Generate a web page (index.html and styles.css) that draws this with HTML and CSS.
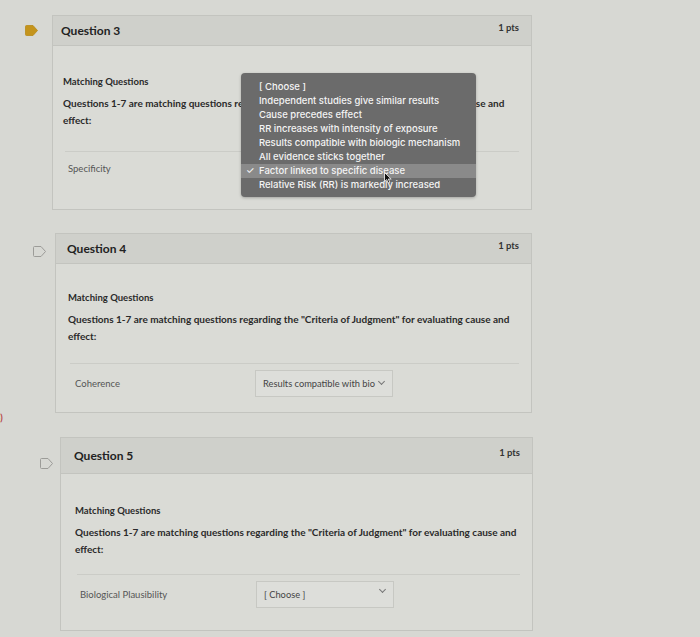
FILE: index.html
```html
<!DOCTYPE html>
<html>
<head>
<meta charset="utf-8">
<link rel="stylesheet" href="styles.css">
</head>
<body>
<div class="page">
  <span class="edge-mark">-)</span>

  <div class="question q3">
    <svg class="flag" viewBox="0 0 13 11" width="13" height="11"><path d="M1.5 0.5 H8 L12.5 5.5 L8 10.5 H1.5 Q0.5 10.5 0.5 9.5 V1.5 Q0.5 0.5 1.5 0.5 Z" fill="#c4941c" stroke="#b88a18" stroke-width="0.8"/></svg>
    <div class="card">
      <div class="card-header">
        <span class="title">Question 3</span>
        <span class="pts">1 pts</span>
      </div>
      <div class="card-body">
        <div class="mq">Matching Questions</div>
        <div class="qtext">Questions 1-7 are matching questions regarding the "Criteria of Judgment" for evaluating cause and effect:</div>
        <div class="sep"></div>
        <div class="row">
          <span class="label">Specificity</span>
          <span class="select"><span class="select-text">Factor linked to specific</span><span class="chev"></span></span>
        </div>
      </div>
      <div class="popup">
        <div class="item">[ Choose ]</div>
        <div class="item">Independent studies give similar results</div>
        <div class="item">Cause precedes effect</div>
        <div class="item">RR increases with intensity of exposure</div>
        <div class="item">Results compatible with biologic mechanism</div>
        <div class="item">All evidence sticks together</div>
        <div class="item selected"><span class="check">✓</span>Factor linked to specific disease</div>
        <div class="item">Relative Risk (RR) is markedly increased</div>
        <svg class="cursor" viewBox="0 0 8 12" width="8" height="12"><path d="M0.5 0.5 L0.5 9.5 L2.7 7.5 L4.3 11 L5.8 10.3 L4.3 7 L7.2 7 Z" fill="#111" stroke="#fff" stroke-width="0.8"/></svg>
      </div>
    </div>
  </div>

  <div class="question q4">
    <svg class="flag" viewBox="0 0 13 11" width="13" height="11"><path d="M1.5 0.5 H8 L12.5 5.5 L8 10.5 H1.5 Q0.5 10.5 0.5 9.5 V1.5 Q0.5 0.5 1.5 0.5 Z" fill="none" stroke="#9c9c98" stroke-width="1"/></svg>
    <div class="card">
      <div class="card-header">
        <span class="title">Question 4</span>
        <span class="pts">1 pts</span>
      </div>
      <div class="card-body">
        <div class="mq">Matching Questions</div>
        <div class="qtext">Questions 1-7 are matching questions regarding the "Criteria of Judgment" for evaluating cause and effect:</div>
        <div class="sep"></div>
        <div class="row">
          <span class="label">Coherence</span>
          <span class="select"><span class="select-text">Results compatible with bio</span><span class="chev"></span></span>
        </div>
      </div>
    </div>
  </div>

  <div class="question q5">
    <svg class="flag" viewBox="0 0 13 11" width="13" height="11"><path d="M1.5 0.5 H8 L12.5 5.5 L8 10.5 H1.5 Q0.5 10.5 0.5 9.5 V1.5 Q0.5 0.5 1.5 0.5 Z" fill="none" stroke="#9c9c98" stroke-width="1"/></svg>
    <div class="card">
      <div class="card-header">
        <span class="title">Question 5</span>
        <span class="pts">1 pts</span>
      </div>
      <div class="card-body">
        <div class="mq">Matching Questions</div>
        <div class="qtext">Questions 1-7 are matching questions regarding the "Criteria of Judgment" for evaluating cause and effect:</div>
        <div class="sep"></div>
        <div class="row">
          <span class="label">Biological Plausibility</span>
          <span class="select"><span class="select-text">[ Choose ]</span><span class="chev"></span></span>
        </div>
      </div>
    </div>
  </div>
</div>
</body>
</html>
```
FILE: styles.css
```css
html, body {
  margin: 0;
  padding: 0;
  background: #d7d8d3;
}
body {
  font-family: Lato, "Open Sans", "Liberation Sans", sans-serif;
  color: #2b2b2b;
  overflow: hidden;
}
.page {
  position: relative;
  padding-top: 15px;
  height: 622px;
}
.edge-mark {
  position: absolute;
  left: -3px;
  top: 412px;
  font-size: 9px;
  color: #b54040;
  font-weight: 700;
}
.question {
  display: flex;
  align-items: flex-start;
}
.flag {
  flex: none;
  display: block;
}
.card {
  position: relative;
  border: 1px solid #c3c4bf;
  background: #dadbd6;
  box-sizing: border-box;
}
.card-header {
  height: 29px;
  background: #cfd0cb;
  border-bottom: 1px solid #c3c4bf;
  display: flex;
  align-items: center;
  justify-content: space-between;
  padding: 0 12px 0 8px;
}
.title {
  font-size: 12px;
  font-weight: 700;
  color: #222;
}
.pts {
  font-size: 9.5px;
  font-weight: 700;
  color: #333;
  margin-bottom: 6px;
}
.card-body {
  padding: 27px 10px 15px 10px;
}
.mq {
  font-size: 9.5px;
  font-weight: 700;
  line-height: 14px;
  color: #2a2a2a;
}
.qtext {
  margin-top: 6px;
  font-size: 10px;
  font-weight: 700;
  line-height: 17px;
  color: #2a2a2a;
}
.sep {
  margin: 18px 2px 0 2px;
  border-top: 1px solid #cbccc7;
}
.row {
  display: flex;
  align-items: center;
  height: 28px;
  margin: 5px 0 0 2px;
  padding-left: 5px;
}
.label {
  width: 181px;
  flex: none;
  font-size: 9.5px;
  color: #555;
}
.select {
  width: 138px;
  height: 27px;
  box-sizing: border-box;
  border: 1px solid #c7c8c3;
  background: #dddeda;
  display: flex;
  align-items: center;
  justify-content: space-between;
  padding: 0 8px 0 7px;
  font-size: 9.3px;
  color: #444;
}
.chev {
  width: 4px;
  height: 4px;
  border-right: 1px solid #777;
  border-bottom: 1px solid #777;
  transform: rotate(45deg);
  margin-bottom: 3px;
}

/* per-question placement */
.q3 { padding-left: 25px; margin-bottom: 23px; }
.q3 .flag { margin: 10px 14px 0 0; }
.q3 .card { width: 480px; }
.q3 .card-body { padding-top: 29px; padding-bottom: 27px; }
.q3 .sep { margin-top: 22px; }
.q3 .row { margin-top: 2px; padding-left: 3px; }

.q4 { padding-left: 33px; margin-bottom: 24px; }
.q4 .flag { margin: 13px 9px 0 0; }
.q4 .card { width: 477px; }
.q4 .card-header { padding-left: 11px; }
.q4 .card-body { padding-left: 12px; }
.q4 .label { width: 180px; }

.q5 { padding-left: 40px; }
.q5 .flag { margin: 21px 7px 0 0; }
.q5 .card { width: 473px; }
.q5 .card-header { height: 35px; padding-left: 13px; }
.q5 .card-body { padding-top: 30px; padding-left: 14px; padding-bottom: 22px; }
.q5 .sep { margin-top: 16px; }
.q5 .row { padding-left: 3px; }
.q5 .label { width: 176px; }
.q5 .chev { margin-bottom: 10px; }

/* open native dropdown menu */
.popup {
  position: absolute;
  left: 188px;
  top: 57px;
  width: 235px;
  box-sizing: border-box;
  padding: 7px 0 5px 0;
  background: #6b6b6b;
  border-radius: 4px;
  box-shadow: 0 1px 3px rgba(0,0,0,0.25);
  font-family: Inter, "Noto Sans", "Liberation Sans", sans-serif;
  font-size: 9.5px;
  font-weight: 500;
  color: #f4f4f4;
}
.item {
  position: relative;
  height: 14px;
  line-height: 14px;
  padding-left: 18px;
  white-space: nowrap;
}
.item.selected {
  background: #8a8a8a;
}
.check {
  position: absolute;
  left: 5px;
  top: 0;
}
.cursor {
  position: absolute;
  left: 143px;
  top: 99px;
}
```
